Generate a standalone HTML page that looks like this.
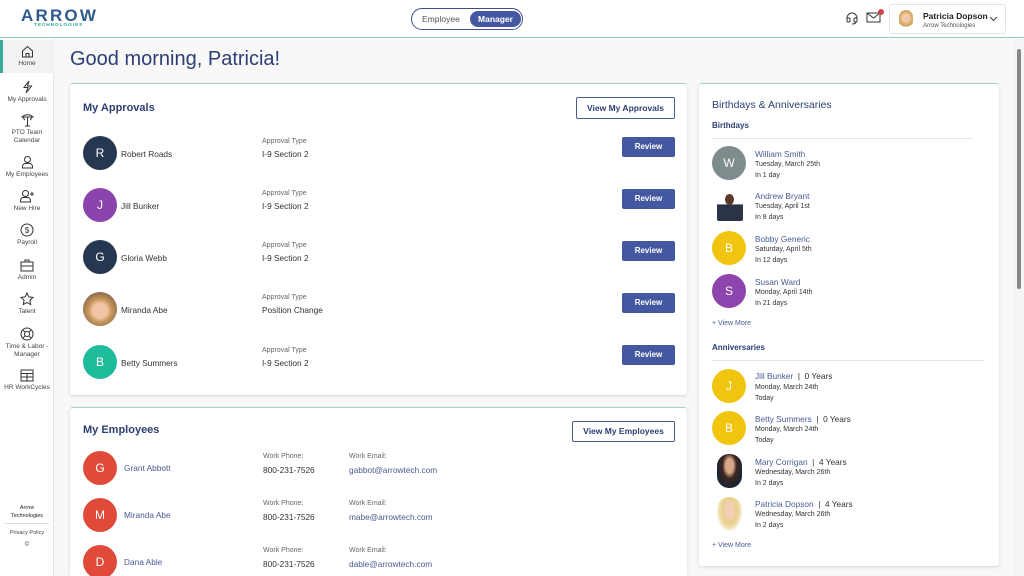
<!DOCTYPE html>
<html style="width:1024px;height:576px;overflow:hidden"><head><meta charset="utf-8">
<style>
*{margin:0;padding:0;box-sizing:border-box}
body{width:1024px;height:576px;overflow:hidden;background:#f8f8f8;font-family:"Liberation Sans",sans-serif;color:#333;position:relative}
.a{position:absolute;white-space:nowrap}
.hdr{position:absolute;left:0;top:0;width:1024px;height:38px;background:#fff;border-bottom:1px solid #8fcfc6}
.side{position:absolute;left:0;top:39px;width:54px;height:537px;background:#fff;border-right:1px solid #e6e6e6}
.nav{position:absolute;left:0;width:54px;text-align:center;font-size:6.5px;color:#444;line-height:8px}
.nav svg{display:block;margin:0 auto 2px}
.card{position:absolute;background:#fff;border-top:1px solid #9fd3cc;box-shadow:0 1px 3px rgba(0,0,0,.15);border-radius:3px}
.av{position:absolute;width:34px;height:34px;border-radius:50%;color:#fff;font-size:12px;text-align:center;line-height:34px}
.t{color:#2c3e73}
.lnk{color:#4a5a92}
.rev{position:absolute;left:622px;width:53px;height:20px;background:#4358a0;color:#fff;font-size:8px;font-weight:bold;text-align:center;line-height:20px;border-radius:2px}
.s8{font-size:8.3px}.s7{font-size:7px;color:#666}
</style></head><body>
<div class="hdr">
 <div class="a" style="left:21px;top:6px;font-size:17px;font-weight:bold;letter-spacing:2.2px;color:#2e5a8e">ARROW</div>
 <div class="a" style="left:34px;top:23px;font-size:4.8px;color:#2aa89a;letter-spacing:.9px;font-weight:bold">TECHNOLOGIES</div>
 <div class="a" style="left:411px;top:8px;width:112px;height:22px;border:1px solid #3e4e8e;border-radius:11px;background:#fff"></div>
 <div class="a" style="left:422px;top:14px;font-size:8.5px;color:#555">Employee</div>
 <div class="a" style="left:470px;top:11px;width:51px;height:16px;border-radius:8px;background:#4358a0;color:#fff;font-size:8.5px;font-weight:bold;text-align:center;line-height:16px">Manager</div>
 <svg class="a" style="left:845px;top:11px" width="14" height="14" viewBox="0 0 14 14" fill="none" stroke="#333" stroke-width="1"><path d="M2 9V7a5 5 0 0 1 10 0v2"/><rect x="2" y="7" width="3" height="4" rx="1"/><rect x="9" y="7" width="3" height="4" rx="1"/><path d="M11 11c0 1.5-2 2-4 2"/></svg>
 <svg class="a" style="left:866px;top:11px" width="16" height="12" viewBox="0 0 16 12" fill="none" stroke="#333" stroke-width="1"><rect x="1" y="2" width="13" height="9"/><path d="M1 2l6.5 5L14 2"/></svg>
 <div class="a" style="left:878px;top:9px;width:6px;height:6px;border-radius:50%;background:#d0434a"></div>
 <div class="a" style="left:889px;top:4px;width:117px;height:30px;border:1px solid #e3e3e3;border-radius:3px;background:#fff"></div>
 <div class="a" style="left:899px;top:10px;width:14px;height:18px;border-radius:7px;background:radial-gradient(circle at 50% 45%,#f2c9a8 35%,#e3b873 40%,#caa063 70%,#fff 72%)"></div>
 <div class="a" style="left:923px;top:11px;font-size:8.5px;font-weight:bold;color:#222">Patricia Dopson</div>
 <div class="a" style="left:923px;top:23px;font-size:6px;color:#555">Arrow Technologies</div>
 <svg class="a" style="left:989px;top:16px" width="9" height="6" viewBox="0 0 9 6" fill="none" stroke="#444" stroke-width="1.1"><path d="M1 1l3.5 3.5L8 1"/></svg>
</div>
<div class="side">
 <div class="a" style="left:0;top:1px;width:54px;height:33px;background:#f2f2f2;border-left:3px solid #3aa99a"></div>
 <div class="nav" style="top:6px"><svg width="13" height="13" viewBox="0 0 13 13" fill="none" stroke="#333" stroke-width="1"><path d="M1.5 6L6.5 1.5 11.5 6V12H1.5Z"/><path d="M5 12V8.5h3V12"/></svg>Home</div>
 <div class="nav" style="top:41px"><svg width="13" height="14" viewBox="0 0 13 14" fill="none" stroke="#333" stroke-width="1"><path d="M8 1L3 7.5h4L5 13l5.5-7h-4z"/></svg>My Approvals</div>
 <div class="nav" style="top:74px"><svg width="13" height="14" viewBox="0 0 13 14" fill="none" stroke="#333" stroke-width="1"><path d="M1 4c3-3 8-3 11 0H1zM6.5 4v9M4 13h5M2.5 4c0 2 1.5 3 1.5 3M10.5 4c0 2-1.5 3-1.5 3"/></svg>PTO Team<br>Calendar</div>
 <div class="nav" style="top:116px"><svg width="13" height="14" viewBox="0 0 13 14" fill="none" stroke="#333" stroke-width="1"><circle cx="6.5" cy="4.5" r="3"/><path d="M1.5 13v-1.5a3 3 0 0 1 3-3h4a3 3 0 0 1 3 3V13z"/></svg>My Employees</div>
 <div class="nav" style="top:150px"><svg width="16" height="14" viewBox="0 0 16 14" fill="none" stroke="#333" stroke-width="1"><circle cx="6.5" cy="4.5" r="3"/><path d="M1.5 13v-1.5a3 3 0 0 1 3-3h4a3 3 0 0 1 3 3V13zM13 3v4M11 5h4"/></svg>New Hire</div>
 <div class="nav" style="top:184px"><svg width="14" height="14" viewBox="0 0 14 14" fill="none" stroke="#333" stroke-width="1"><circle cx="7" cy="7" r="6"/><text x="7" y="10" font-size="8" text-anchor="middle" fill="#333" stroke="none" font-family="Liberation Sans">$</text></svg>Payroll</div>
 <div class="nav" style="top:219px"><svg width="14" height="14" viewBox="0 0 14 14" fill="none" stroke="#333" stroke-width="1"><rect x="1" y="4" width="12" height="9"/><path d="M5 4V2h4v2M1 8h12"/></svg>Admin</div>
 <div class="nav" style="top:253px"><svg width="14" height="14" viewBox="0 0 14 14" fill="none" stroke="#333" stroke-width="1"><path d="M7 1l1.8 3.9 4.2.5-3.1 2.9.8 4.2L7 10.4l-3.7 2.1.8-4.2L1 5.4l4.2-.5z"/></svg>Talent</div>
 <div class="nav" style="top:288px"><svg width="14" height="14" viewBox="0 0 14 14" fill="none" stroke="#333" stroke-width="1"><circle cx="7" cy="7" r="6"/><circle cx="7" cy="7" r="2.5"/><path d="M3 3l2.3 2.3M11 3L8.7 5.3M3 11l2.3-2.3M11 11L8.7 8.7"/></svg>Time &amp; Labor -<br>Manager</div>
 <div class="nav" style="top:330px"><svg width="14" height="13" viewBox="0 0 14 13" fill="none" stroke="#333" stroke-width="1"><rect x="1" y="1" width="12" height="11"/><path d="M1 4.5h12M1 8h12M7 4.5V12"/></svg>HR WorkCycles</div>
 <div class="nav" style="top:465px;font-size:5.5px;color:#222">Arrow<br>Technologies</div>
 <div class="a" style="left:4px;top:484px;width:45px;height:1px;background:#ddd"></div>
 <div class="nav" style="top:490px;font-size:5.5px">Privacy Policy</div>
 <div class="nav" style="top:502px;font-size:6px">©</div>
</div>
<div class="a t" style="left:70px;top:48px;font-size:20px;color:#2c3e73">Good morning, Patricia!</div>

<div class="card" style="left:70px;top:83px;width:617px;height:312px"></div>
<div class="a t" style="left:83px;top:102px;font-size:11px;font-weight:bold">My Approvals</div>
<div class="a" style="left:576px;top:97px;width:99px;height:22px;border:1px solid #4a5a92;border-radius:2px;background:#fff;font-size:8.5px;color:#2c3e73;text-align:center;line-height:20px;font-weight:bold">View My Approvals</div>

<div class="av" style="left:83px;top:136px;background:#253850">R</div>
<div class="a s8" style="left:121px;top:149px">Robert Roads</div>
<div class="a s7" style="left:262px;top:138px">Approval Type</div><div class="a s8" style="left:262px;top:149px">I-9 Section 2</div>
<div class="rev" style="top:137px">Review</div>

<div class="av" style="left:83px;top:188px;background:#8c44ad">J</div>
<div class="a s8" style="left:121px;top:201px">Jill Bunker</div>
<div class="a s7" style="left:262px;top:190px">Approval Type</div><div class="a s8" style="left:262px;top:201px">I-9 Section 2</div>
<div class="rev" style="top:189px">Review</div>

<div class="av" style="left:83px;top:240px;background:#253850">G</div>
<div class="a s8" style="left:121px;top:253px">Gloria Webb</div>
<div class="a s7" style="left:262px;top:242px">Approval Type</div><div class="a s8" style="left:262px;top:253px">I-9 Section 2</div>
<div class="rev" style="top:241px">Review</div>

<div class="av" style="left:83px;top:292px;background:radial-gradient(circle at 50% 55%,#f0c4a4 30%,#c9985e 45%,#8a6a4a 75%)"></div>
<div class="a s8" style="left:121px;top:305px">Miranda Abe</div>
<div class="a s7" style="left:262px;top:294px">Approval Type</div><div class="a s8" style="left:262px;top:305px">Position Change</div>
<div class="rev" style="top:293px">Review</div>

<div class="av" style="left:83px;top:345px;background:#1fbc9c">B</div>
<div class="a s8" style="left:121px;top:358px">Betty Summers</div>
<div class="a s7" style="left:262px;top:347px">Approval Type</div><div class="a s8" style="left:262px;top:358px">I-9 Section 2</div>
<div class="rev" style="top:345px">Review</div>

<div class="card" style="left:70px;top:407px;width:617px;height:169px;border-radius:3px 3px 0 0"></div>
<div class="a t" style="left:83px;top:424px;font-size:11px;font-weight:bold">My Employees</div>
<div class="a" style="left:572px;top:421px;width:103px;height:21px;border:1px solid #4a5a92;border-radius:2px;background:#fff;font-size:8.5px;color:#2c3e73;text-align:center;line-height:19px;font-weight:bold">View My Employees</div>

<div class="av" style="left:83px;top:451px;background:#e04a3b">G</div>
<div class="a s8 lnk" style="left:124px;top:463px">Grant Abbott</div>
<div class="a s7" style="left:263px;top:453px">Work Phone:</div><div class="a s8" style="left:263px;top:465px">800-231-7526</div>
<div class="a s7" style="left:349px;top:453px">Work Email:</div><div class="a s8 lnk" style="left:349px;top:465px">gabbot@arrowtech.com</div>

<div class="av" style="left:83px;top:498px;background:#e04a3b">M</div>
<div class="a s8 lnk" style="left:124px;top:510px">Miranda Abe</div>
<div class="a s7" style="left:263px;top:500px">Work Phone:</div><div class="a s8" style="left:263px;top:512px">800-231-7526</div>
<div class="a s7" style="left:349px;top:500px">Work Email:</div><div class="a s8 lnk" style="left:349px;top:512px">mabe@arrowtech.com</div>

<div class="av" style="left:83px;top:545px;background:#e04a3b">D</div>
<div class="a s8 lnk" style="left:124px;top:557px">Dana Able</div>
<div class="a s7" style="left:263px;top:547px">Work Phone:</div><div class="a s8" style="left:263px;top:559px">800-231-7526</div>
<div class="a s7" style="left:349px;top:547px">Work Email:</div><div class="a s8 lnk" style="left:349px;top:559px">dable@arrowtech.com</div>

<div class="card" style="left:699px;top:83px;width:300px;height:483px"></div>
<div class="a t" style="left:712px;top:99px;font-size:10.5px">Birthdays &amp; Anniversaries</div>
<div class="a t" style="left:712px;top:121px;font-size:8px;font-weight:bold">Birthdays</div>
<div class="a" style="left:712px;top:138px;width:261px;height:1px;background:#e6e6e6"></div>

<div class="av" style="left:712px;top:146px;background:#7f8c8d">W</div>
<div class="a s8 lnk" style="left:755px;top:149px">William Smith</div><div class="a" style="left:755px;top:161px;font-size:7px">Tuesday, March 25th</div><div class="a" style="left:755px;top:172px;font-size:7px">In 1 day</div>
<div class="a" style="left:717px;top:193px;width:26px;height:28px;background:linear-gradient(#fff 0,#fff 40%,#2a3446 41%);border-radius:2px"></div><div class="a" style="left:725px;top:194px;width:9px;height:11px;border-radius:50%;background:#5a3a2a"></div>
<div class="a s8 lnk" style="left:755px;top:191px">Andrew Bryant</div><div class="a" style="left:755px;top:203px;font-size:7px">Tuesday, April 1st</div><div class="a" style="left:755px;top:214px;font-size:7px">In 8 days</div>
<div class="av" style="left:712px;top:231px;background:#f1c40f">B</div>
<div class="a s8 lnk" style="left:755px;top:234px">Bobby Generic</div><div class="a" style="left:755px;top:246px;font-size:7px">Saturday, April 5th</div><div class="a" style="left:755px;top:257px;font-size:7px">In 12 days</div>
<div class="av" style="left:712px;top:274px;background:#8e44ad">S</div>
<div class="a s8 lnk" style="left:755px;top:277px">Susan Ward</div><div class="a" style="left:755px;top:289px;font-size:7px">Monday, April 14th</div><div class="a" style="left:755px;top:300px;font-size:7px">In 21 days</div>
<div class="a lnk" style="left:712px;top:320px;font-size:7px">+ View More</div>

<div class="a t" style="left:712px;top:343px;font-size:8px;font-weight:bold">Anniversaries</div>
<div class="a" style="left:712px;top:360px;width:273px;height:1px;background:#e6e6e6"></div>

<div class="av" style="left:712px;top:369px;background:#f1c40f">J</div>
<div class="a s8" style="left:755px;top:371px"><span class="lnk">Jill Bunker</span> &nbsp;|&nbsp; 0 Years</div><div class="a" style="left:755px;top:384px;font-size:7px">Monday, March 24th</div><div class="a" style="left:755px;top:395px;font-size:7px">Today</div>
<div class="av" style="left:712px;top:411px;background:#f1c40f">B</div>
<div class="a s8" style="left:755px;top:414px"><span class="lnk">Betty Summers</span> &nbsp;|&nbsp; 0 Years</div><div class="a" style="left:755px;top:426px;font-size:7px">Monday, March 24th</div><div class="a" style="left:755px;top:437px;font-size:7px">Today</div>
<div class="a" style="left:717px;top:454px;width:25px;height:34px;border-radius:12px;background:radial-gradient(ellipse at 50% 35%,#d9a888 22%,#3b2620 40%,#1e2533 70%)"></div>
<div class="a s8" style="left:755px;top:457px"><span class="lnk">Mary Corrigan</span> &nbsp;|&nbsp; 4 Years</div><div class="a" style="left:755px;top:469px;font-size:7px">Wednesday, March 26th</div><div class="a" style="left:755px;top:480px;font-size:7px">In 2 days</div>
<div class="a" style="left:717px;top:497px;width:25px;height:34px;border-radius:12px;background:radial-gradient(ellipse at 50% 40%,#f2cfb5 25%,#e8cf8a 40%,#f0e0b0 60%,#fff 75%)"></div>
<div class="a s8" style="left:755px;top:499px"><span class="lnk">Patricia Dopson</span> &nbsp;|&nbsp; 4 Years</div><div class="a" style="left:755px;top:511px;font-size:7px">Wednesday, March 26th</div><div class="a" style="left:755px;top:522px;font-size:7px">In 2 days</div>
<div class="a lnk" style="left:712px;top:542px;font-size:7px">+ View More</div>

<div class="a" style="left:1014px;top:39px;width:10px;height:537px;background:#f5f5f5"></div>
<div class="a" style="left:1017px;top:49px;width:4px;height:240px;background:#888;border-radius:2px"></div>
</body></html>
